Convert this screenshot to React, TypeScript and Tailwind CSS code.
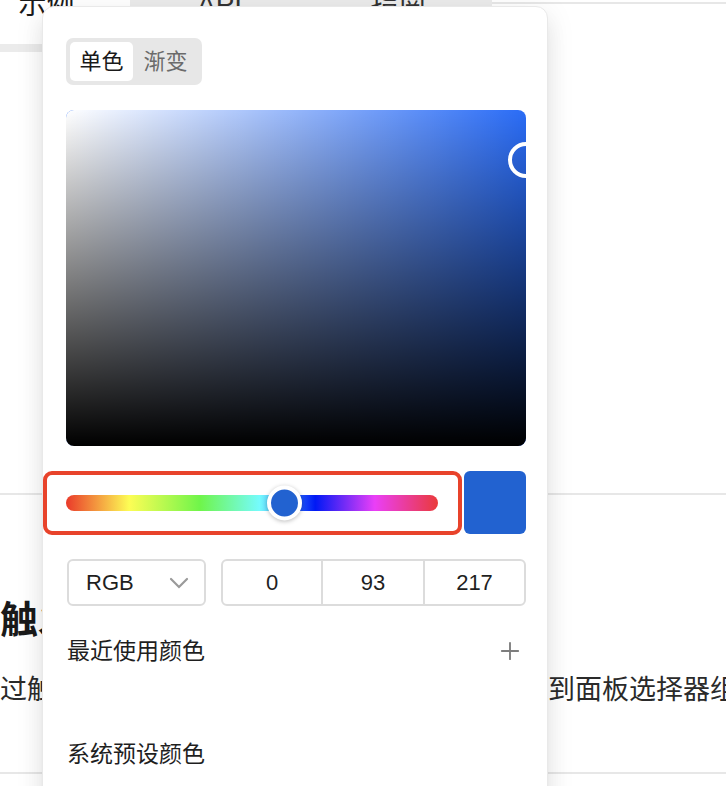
import { Plus } from "lucide-react";

const font = "font-['Liberation_Sans','Noto_Sans_CJK_SC',sans-serif]";

function TabBar() {
  return (
    <div className="flex items-start">
      <div className="-ml-[41px] -mt-[38px] flex h-[90px] w-[533px] shrink-0 rounded-b-[10px] bg-[#ebebeb] px-[4px] pt-[4px] pb-[8px]">
        <div className="flex w-[168px] items-center justify-center rounded-[8px] bg-white text-[28px] text-[#1a1a1a]">示例</div>
        <div className="flex w-[180px] items-center justify-center text-[28px] text-[#333]">API</div>
        <div className="flex w-[180px] items-center justify-center text-[28px] text-[#333]">指南</div>
      </div>
      <div className="mt-[2px] h-[2px] flex-1 bg-[#e7e7e7]" />
    </div>
  );
}

function ModeSwitch() {
  return (
    <div className="flex h-[47px] w-[136px] rounded-[7px] bg-[#e7e7e7] p-[4px] text-[22px]">
      <div className="flex w-[63px] items-center justify-center rounded-[5px] bg-white text-[#1a1a1a]">单色</div>
      <div className="flex flex-1 items-center justify-center text-[#6b6b6b]">渐变</div>
    </div>
  );
}

function SaturationPanel() {
  return (
    <div className="relative h-[336px] w-full overflow-hidden rounded-[8px] bg-[#2a6cf6]">
      <div className="absolute inset-0 bg-gradient-to-r from-white to-transparent" />
      <div className="absolute inset-0 bg-gradient-to-t from-black to-transparent" />
      <div className="absolute top-[32px] left-[442px] h-[36px] w-[36px] rounded-full border-[4px] border-white" />
    </div>
  );
}

function HueRow() {
  return (
    <div className="relative flex h-[63px] items-center">
      <div className="relative h-[16px] w-[372px] rounded-full bg-[linear-gradient(to_right,#ea3a2a_0%,#fdfd55_17%,#6ff54a_36%,#75fbfd_52%,#0019f5_67%,#ea3ff7_83%,#ea3a3a_100%)]">
        <div className="absolute top-1/2 left-[201px] h-[35px] w-[35px] -translate-y-1/2 rounded-full border-[4px] border-white bg-[#2262d0] shadow-[0_1px_4px_rgba(0,0,0,0.25)]" />
      </div>
      <div className="ml-auto h-[63px] w-[62px] rounded-[6px] bg-[#2262d0]" />
      <div className="pointer-events-none absolute top-0 -left-[23px] h-[64px] w-[419px] rounded-[9px] border-[4px] border-[#e8432b]" />
    </div>
  );
}

function InputsRow() {
  return (
    <div className="flex h-[47px] items-stretch gap-[15px] text-[22px] text-[#1f1f1f]">
      <div className="flex w-[139px] items-center justify-between rounded-[6px] border-2 border-[#dcdcdc] pr-[14px] pl-[17px]">
        <span>RGB</span>
        <svg width="22" height="14" viewBox="0 0 22 14" fill="none" stroke="#9a9a9a" strokeWidth="2.2" strokeLinecap="round">
          <polyline points="3,3 11,11 19,3" />
        </svg>
      </div>
      <div className="flex flex-1 rounded-[6px] border-2 border-[#dcdcdc]">
        <div className="flex w-[100px] items-center justify-center border-r-2 border-[#dcdcdc]">0</div>
        <div className="flex w-[102px] items-center justify-center border-r-2 border-[#dcdcdc]">93</div>
        <div className="flex flex-1 items-center justify-center">217</div>
      </div>
    </div>
  );
}

function ColorPopup() {
  return (
    <div className="absolute top-[6px] left-[42px] h-[820px] w-[506px] rounded-[12px] border border-[#e9e9e9] bg-white pt-[31px] pr-[21px] pl-[23px] shadow-[0_6px_28px_4px_rgba(0,0,0,0.06),0_16px_20px_2px_rgba(0,0,0,0.06),0_10px_10px_-6px_rgba(0,0,0,0.1)]">
      <ModeSwitch />
      <div className="mt-[25px]">
        <SaturationPanel />
      </div>
      <div className="mt-[25px]">
        <HueRow />
      </div>
      <div className="mt-[25px] pl-[1px]">
        <InputsRow />
      </div>
      <div className="mt-[30px] flex h-[30px] items-center justify-between pl-[1px] text-[23px] text-[#1f1f1f]">
        <span>最近使用颜色</span>
        <Plus size={28} strokeWidth={1.6} className="mr-[2px] text-[#7d7d7d]" />
      </div>
      <div className="mt-[73px] flex h-[30px] items-center pl-[1px] text-[23px] text-[#1f1f1f]">
        <span>系统预设颜色</span>
      </div>
    </div>
  );
}

export default function App() {
  return (
    <div className={`relative h-[786px] w-[726px] overflow-hidden bg-white ${font}`}>
      <TabBar />
      <div className="h-[441px]" />
      <div className="h-[2px] bg-[#e7e7e7]" />
      <h2 className="mt-[100px] h-[50px] text-[38px] leading-[50px] font-bold text-[#1a1a1a]">触发方式</h2>
      <div className="mt-[27px] flex h-[36px] text-[27px] leading-[36px] text-[#2a2a2a] whitespace-nowrap">
        <span className="w-[548px] shrink-0 overflow-hidden">过触发元素打开颜色选择器面板</span>
        <span>到面板选择器组件中</span>
      </div>
      <div className="mt-[64px] h-[2px] bg-[#e7e7e7]" />
      <ColorPopup />
    </div>
  );
}
